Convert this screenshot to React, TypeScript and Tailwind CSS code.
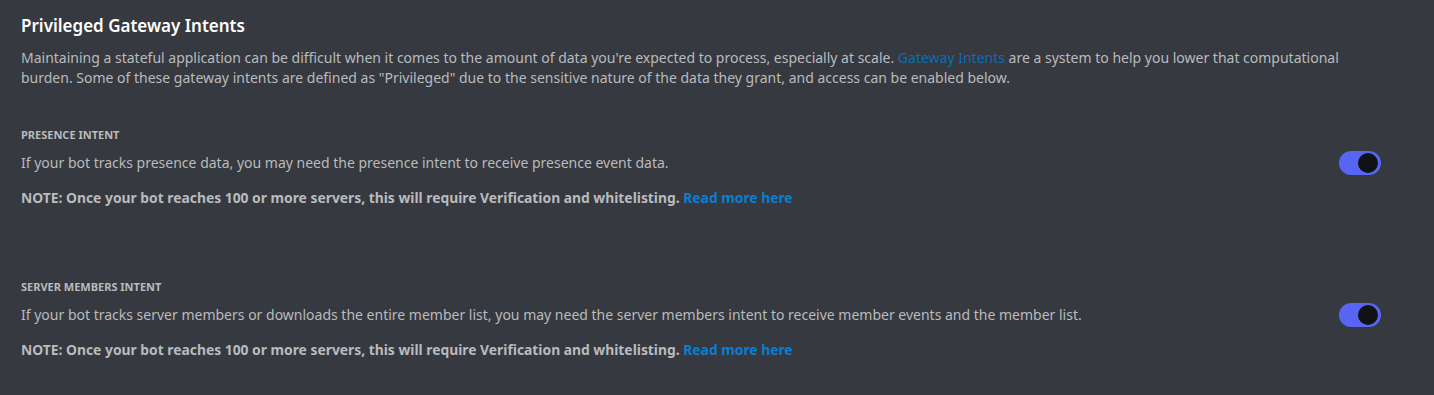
import React from 'react';

const font = { fontFamily: '"Noto Sans", "Open Sans", sans-serif' };

function Toggle() {
  return (
    <div className="w-[42px] h-[24px] rounded-full bg-[#5865f2] flex items-center justify-end px-[3px] shrink-0">
      <div className="w-[20px] h-[20px] rounded-full bg-[#111214]" />
    </div>
  );
}

function Intent({ label, text }: { label: string; text: string }) {
  return (
    <div>
      <h3 className="text-[11px] leading-[14px] font-bold uppercase text-[#b9bbbe]">{label}</h3>
      <div className="flex items-center justify-between mt-[9px] pr-[32px]">
        <p className="text-[14px] leading-[18px] text-[#b9bbbe]">{text}</p>
        <Toggle />
      </div>
      <p className="mt-[14px] text-[13.85px] leading-[18px] font-bold text-[#b9bbbe]">
        NOTE: Once your bot reaches 100 or more servers, this will require Verification and whitelisting.{' '}
        <a className="text-[#0a7ed1]" href="#">Read more here</a>
      </p>
    </div>
  );
}

export default function App() {
  return (
    <div className="min-h-screen bg-[#36393f] px-[21px] pt-[14px]" style={font}>
      <h2 className="text-[17px] leading-[24px] font-semibold text-white">Privileged Gateway Intents</h2>
      <p className="mt-[10px] text-[14px] leading-[20px] text-[#b9bbbe] max-w-[1360px]">
        Maintaining a stateful application can be difficult when it comes to the amount of data you're expected to process, especially at scale.{' '}
        <a className="text-[#0b6cb5]" href="#">Gateway Intents</a> are a system to help you lower that computational burden. Some of these gateway intents are defined as "Privileged" due to the sensitive nature of the data they grant, and access can be enabled below.
      </p>
      <div className="mt-[40px] flex flex-col gap-[73px]">
        <Intent
          label="Presence Intent"
          text="If your bot tracks presence data, you may need the presence intent to receive presence event data."
        />
        <Intent
          label="Server Members Intent"
          text="If your bot tracks server members or downloads the entire member list, you may need the server members intent to receive member events and the member list."
        />
      </div>
    </div>
  );
}
